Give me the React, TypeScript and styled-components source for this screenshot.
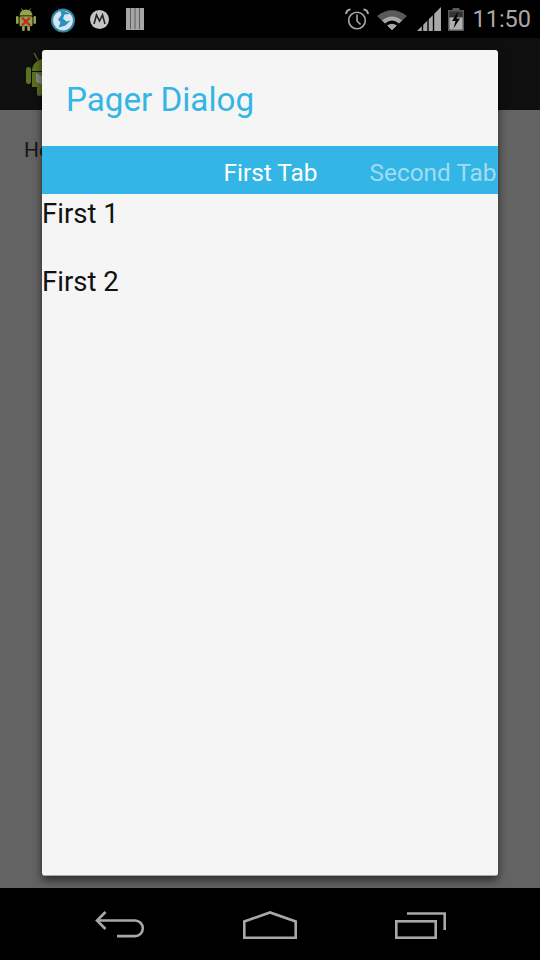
import React from 'react';
import styled, { createGlobalStyle } from 'styled-components';

const GlobalStyle = createGlobalStyle`
  html, body {
    margin: 0;
    padding: 0;
    background: #000;
  }
  body {
    font-family: 'Roboto', 'Liberation Sans', sans-serif;
  }
`;

const Screen = styled.div`
  position: relative;
  width: 540px;
  height: 960px;
  display: flex;
  flex-direction: column;
  overflow: hidden;
  background: #000;
`;

const StatusBar = styled.div`
  height: 38px;
  flex: none;
  display: flex;
  align-items: center;
  background: #000;
  box-sizing: border-box;
  padding: 0 9px 0 16px;
`;

const StatusLeft = styled.div`
  display: flex;
  align-items: center;
  flex: 1;
`;

const StatusRight = styled.div`
  display: flex;
  align-items: center;
`;

const Slot = styled.div<{ $left?: number }>`
  display: flex;
  margin-left: ${props => props.$left ?? 0}px;
`;

const Clock = styled.span`
  color: #a8a8a8;
  font-size: 23.5px;
  line-height: 38px;
  margin-left: 8px;
`;

const ActionBar = styled.div`
  height: 72px;
  flex: none;
  display: flex;
  align-items: center;
  box-sizing: border-box;
  padding-left: 26px;
  background: #0f0f0f;
`;

const Content = styled.div`
  flex: 1;
  background: #636363;
  padding: 27px 24px;
  color: #171717;
  font-size: 21px;
  line-height: 26px;
`;

const NavBar = styled.div`
  height: 72px;
  flex: none;
  background: #000;
  display: flex;
  align-items: center;
  justify-content: center;
  box-sizing: border-box;
  gap: 98px;
  padding: 2px 0 0 0;
`;

const Dialog = styled.div`
  position: absolute;
  left: 42px;
  top: 50px;
  width: 456px;
  height: 826px;
  background: #f5f5f5;
  border-radius: 3px;
  border-bottom: 1px solid #a8a8a8;
  box-sizing: border-box;
  box-shadow: 0 4px 10px rgba(0, 0, 0, 0.6);
  overflow: hidden;
`;

const DialogTitle = styled.div`
  height: 96px;
  display: flex;
  align-items: center;
  box-sizing: border-box;
  padding: 2px 0 0 24px;
  color: #33b5e5;
  font-size: 33.2px;
`;

const TabStrip = styled.div`
  height: 48px;
  background: #33b5e5;
  display: flex;
  align-items: center;
  box-sizing: border-box;
  padding: 4px 0 0 181.500px;
  gap: 52px;
  white-space: nowrap;
  overflow: hidden;
`;

const Tab = styled.span<{ $active?: boolean }>`
  color: ${props => (props.$active ? '#ffffff' : 'rgba(255, 255, 255, 0.55)')};
  font-size: 24.4px;
`;

const Rows = styled.div`
  display: flex;
  flex-direction: column;
  gap: 28px;
`;

const Row = styled.div`
  color: #111;
  font-size: 27.5px;
  line-height: 40px;
`;

const AndroidBadge = () => (
  <svg width="20" height="23" viewBox="0 0 20 23">
    <path d="M5.500 0.500l1.500 2.500M14.500 0.500l-1.500 2.500" stroke="#8a9a4a" strokeWidth="1" />
    <path d="M3.500 7.500a6.500 6 0 0 1 13 0z" fill="#8fa44c" />
    <rect x="3.500" y="8.300" width="13" height="10" rx="1.500" fill="#8fa44c" />
    <rect x="0" y="8" width="2.600" height="8" rx="1.300" fill="#8fa44c" />
    <rect x="17.400" y="8" width="2.600" height="8" rx="1.300" fill="#8fa44c" />
    <rect x="6" y="18" width="2.800" height="5" rx="1.300" fill="#8fa44c" />
    <rect x="11.200" y="18" width="2.800" height="5" rx="1.300" fill="#8fa44c" />
    <path d="M6 9.500l8 8M14 9.500l-8 8" stroke="#c8242a" strokeWidth="2.400" />
  </svg>
);

const BirdLogo = () => (
  <svg width="24" height="28" viewBox="0 0 24 28">
    <circle cx="12" cy="15.500" r="11" fill="#d6e6ec" stroke="#2f84a8" strokeWidth="2" />
    <path d="M5 0.500l3.500 4 5 1.500 5.500 3-5.500 0.500-1.500 4 3.500 3 4-1-5 5-7 2 2-5-2.500-3 3.500-4.500-1-3.500z" fill="#2a8fc0" />
  </svg>
);

const MotoLogo = () => (
  <svg width="19" height="19" viewBox="0 0 19 19">
    <circle cx="9.500" cy="9.500" r="9.500" fill="#c4c4c4" />
    <path d="M4 14l2.500-9 3 6 3-6 2.500 9" fill="none" stroke="#222" strokeWidth="1.600" />
  </svg>
);

const BarsIcon = () => (
  <svg width="18" height="22" viewBox="0 0 18 22">
    <rect width="18" height="22" fill="#a6a6a6" />
    <path d="M4.500 0v21M9 0v21M13.500 0v21" stroke="#5c5c5c" strokeWidth="1" />
  </svg>
);

const AlarmIcon = () => (
  <svg width="24" height="22" viewBox="0 0 24 22" fill="none" stroke="#a8a8a8">
    <circle cx="12" cy="12.500" r="8.300" strokeWidth="1.600" />
    <path d="M12 6.500v6.500l3.500 3.500" strokeWidth="1.600" />
    <path d="M1 6A5 5 0 0 1 5.500 1.500M23 6A5 5 0 0 0 18.500 1.500" strokeWidth="2" />
  </svg>
);

const WifiIcon = () => (
  <svg width="30" height="21" viewBox="0 0 30 21">
    <path d="M0 7Q15-4.500 30 7L15 21z" fill="#5a5a5a" />
    <path d="M5 11.500Q15 3.500 25 11.500L15 21z" fill="#a8a8a8" />
    <path d="M8 14.500Q15 8.500 22 14.500l-2 2Q15 12.800 10 16.500z" fill="#000" />
    <path d="M11 17.300Q15 14.500 19 17.300L15 21z" fill="#a8a8a8" />
  </svg>
);

const SignalIcon = () => (
  <svg width="24" height="24" viewBox="0 0 24 24">
    <path d="M0 24L24 0v24z" fill="#a8a8a8" />
    <path d="M5.500 24V17M11 24V12M16.500 24V6.500" stroke="#000" strokeWidth="1.400" />
  </svg>
);

const BatteryIcon = () => (
  <svg width="16" height="23" viewBox="0 0 16 23">
    <rect x="4.500" y="0" width="7" height="3" fill="#5a5a5a" />
    <rect x="0" y="2" width="16" height="21" fill="#5a5a5a" />
    <rect x="1.500" y="3.500" width="13" height="6" fill="#333" />
    <rect x="1.500" y="9.500" width="13" height="12" fill="#b0b0b0" />
    <path d="M10 3.500L4 13h3.500L5.500 20.500l6.500-10H8.500z" fill="#000" />
  </svg>
);

const AppIcon = () => (
  <svg width="36" height="44" viewBox="0 0 36 44">
    <path d="M8 1l4 7" stroke="#55691f" strokeWidth="1.500" />
    <path d="M6 19a12 12 0 0 1 24 0z" fill="#5b7022" />
    <rect x="6" y="20" width="24" height="15" fill="#5b7022" />
    <rect x="0" y="15" width="5" height="17" rx="2.500" fill="#5b7022" />
    <rect x="11" y="34" width="5" height="10" rx="2.500" fill="#5b7022" />
    <rect x="20" y="34" width="5" height="10" rx="2.500" fill="#5b7022" />
    <path d="M10 21l14 7v8l-14-6z" fill="#8a8a80" />
  </svg>
);

const BackIcon = () => (
  <svg width="50" height="28" viewBox="0 0 50 28" fill="none" stroke="#a8a8a8" strokeWidth="2.600">
    <path d="M10.500 1L2 9.500 10.500 18" />
    <path d="M2 9.500H40a7.800 7.800 0 0 1 0 15.600H22" />
  </svg>
);

const HomeIcon = () => (
  <svg width="54" height="28" viewBox="0 0 54 28" fill="none" stroke="#a8a8a8" strokeWidth="2.600">
    <path d="M1.300 26.700V10.500L27 1.400 52.700 10.500v16.200z" />
  </svg>
);

const RecentIcon = () => (
  <svg width="51" height="27" viewBox="0 0 51 27" fill="none" stroke="#a8a8a8" strokeWidth="2.600">
    <rect x="1.300" y="9.300" width="39.400" height="16.400" />
    <path d="M12 1.500h37.700V18" />
  </svg>
);

const App: React.FC = () => {
  return (
    <Screen>
      <GlobalStyle />
      <StatusBar>
        <StatusLeft>
          <Slot><AndroidBadge /></Slot>
          <Slot $left={15}><BirdLogo /></Slot>
          <Slot $left={15}><MotoLogo /></Slot>
          <Slot $left={17}><BarsIcon /></Slot>
        </StatusLeft>
        <StatusRight>
          <Slot><AlarmIcon /></Slot>
          <Slot $left={8}><WifiIcon /></Slot>
          <Slot $left={10}><SignalIcon /></Slot>
          <Slot $left={7}><BatteryIcon /></Slot>
          <Clock>11:50</Clock>
        </StatusRight>
      </StatusBar>
      <ActionBar>
        <AppIcon />
      </ActionBar>
      <Content>Hello world!</Content>
      <NavBar>
        <BackIcon />
        <HomeIcon />
        <RecentIcon />
      </NavBar>
      <Dialog>
        <DialogTitle>Pager Dialog</DialogTitle>
        <TabStrip>
          <Tab $active>First Tab</Tab>
          <Tab>Second Tab</Tab>
        </TabStrip>
        <Rows>
          <Row>First 1</Row>
          <Row>First 2</Row>
        </Rows>
      </Dialog>
    </Screen>
  );
};

export default App;
